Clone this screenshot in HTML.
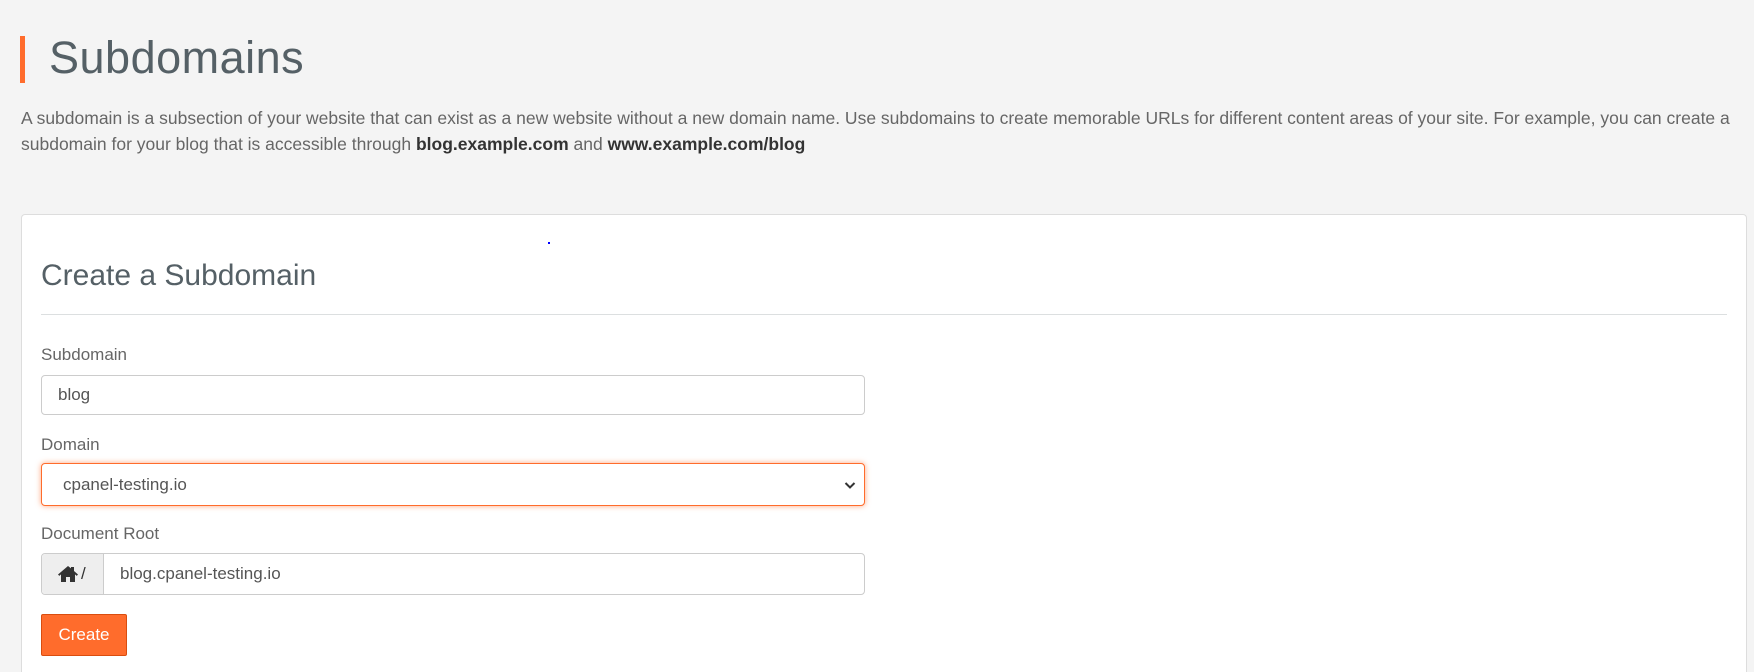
<!DOCTYPE html>
<html style="height:672px;overflow:hidden"><head><style>
body{margin:0;width:1754px;height:672px;background:#f4f4f4;font-family:"Liberation Sans",sans-serif;color:#444;overflow:hidden;position:relative}
.bar{position:absolute;left:20px;top:36px;width:5px;height:47px;background:#ff6c2c}
h1{position:absolute;left:49px;top:32px;margin:0;font-weight:300;font-size:45px;color:#556066;letter-spacing:0.5px}
.desc{position:absolute;left:21px;top:106px;width:1735px;font-size:17.5px;line-height:25.5px;color:#666}
.desc b{color:#333}
.card{position:absolute;left:21px;top:214px;width:1724px;height:462px;background:#fff;border:1px solid #ddd;border-bottom:none;border-radius:4px 4px 0 0}
.dot{position:absolute;left:548px;top:242px;width:2px;height:2px;background:#00f}
h2{position:absolute;left:41px;top:259px;margin:0;font-weight:300;font-size:30px;color:#556066}
.hr{position:absolute;left:41px;top:314px;width:1686px;height:1px;background:#dcdfe0}
.lab{position:absolute;left:41px;font-size:17px;color:#666}
.inp{position:absolute;left:41px;width:824px;height:40px;border:1px solid #ccc;border-radius:4px;background:#fff;box-sizing:border-box;font-size:17px;color:#555;line-height:38px;padding-left:16px}
.sel{border-color:#ff6c2c;box-shadow:0 0 6px rgba(255,108,44,.6)}
.addon{position:absolute;left:0;top:0;bottom:0;width:61px;background:#eee;border-right:1px solid #ccc;border-radius:4px 0 0 4px}
.btn{position:absolute;left:41px;top:614px;width:86px;height:42px;background:#ff6c2c;border:1px solid #d94d0f;box-sizing:border-box;border-radius:2px;color:#fff;font-size:17px;text-align:center;line-height:40px}
</style></head><body>
<div class="bar"></div>
<h1>Subdomains</h1>
<div class="desc">A subdomain is a subsection of your website that can exist as a new website without a new domain name. Use subdomains to create memorable URLs for different content areas of your site. For example, you can create a subdomain for your blog that is accessible through <b>blog.example.com</b> and <b>www.example.com/blog</b></div>
<div class="card"></div>
<div class="dot"></div>
<h2>Create a Subdomain</h2>
<div class="hr"></div>
<div class="lab" style="top:345px">Subdomain</div>
<div class="inp" style="top:375px">blog</div>
<div class="lab" style="top:435px">Domain</div>
<div class="inp sel" style="top:463px;height:43px;line-height:41px;padding-left:21px">cpanel-testing.io
<svg style="position:absolute;right:8px;top:17px" width="12" height="9" viewBox="0 0 12 9"><path d="M1.5 2l4.5 4.5L10.5 2" stroke="#333" stroke-width="2" fill="none"/></svg></div>
<div class="lab" style="top:524px">Document Root</div>
<div class="inp" style="top:553px;height:42px;line-height:40px;padding-left:78px">
<div class="addon"><svg style="position:absolute;left:16px;top:12px" width="20" height="16" viewBox="0 0 20 16"><path d="M10 0L0 8.5l1.3 1.4L3 8.4V16h5v-5h4v5h5V8.4l1.7 1.5L20 8.5 16 5V1h-3v1.4z" fill="#333"/></svg><span style="position:absolute;left:39px;top:0;color:#333">/</span></div>blog.cpanel-testing.io</div>
<div class="btn">Create</div>
</body></html>
